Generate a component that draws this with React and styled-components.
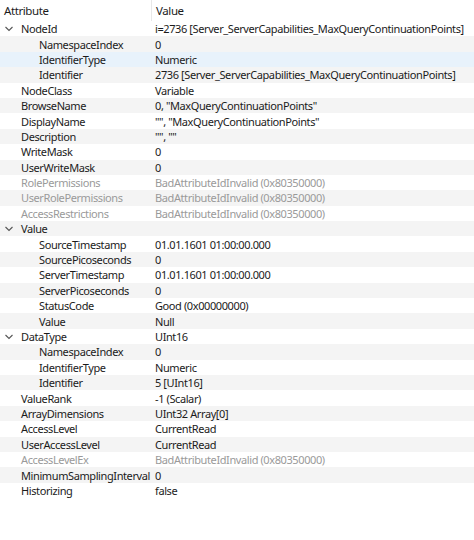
import React from "react";
import styled, { createGlobalStyle } from "styled-components";

const GlobalStyle = createGlobalStyle`
	html, body {
		margin: 0;
		padding: 0;
		background: #ffffff;
	}
	body {
		font-family: "Noto Sans", "Open Sans", sans-serif;
		font-size: 11px;
		letter-spacing: -0.4px;
		color: #1b1b1b;
	}
`;

const Grid = styled.div`
	width: 474px;
	height: 540px;
	background: #ffffff;
	display: flex;
	flex-direction: column;
`;

const Header = styled.div`
	display: grid;
	grid-template-columns: 151px 1fr;
	height: 21px;
	align-items: center;
	font-size: 11.5px;
`;

const HeaderCell = styled.div`
	padding-left: 4px;
	height: 100%;
	display: flex;
	align-items: center;
	border-left: ${(p) => (p.first ? "none" : "1px solid #e8e8e8")};
`;

const Row = styled.div`
	display: grid;
	grid-template-columns: 151px 1fr;
	height: 15.4px;
	align-items: center;
	white-space: nowrap;
	background: ${(p) => (p.hot ? "#e8f2fb" : p.alt ? "#f4f4f4" : "#ffffff")};
	color: ${(p) => (p.dim ? "#9a9a9a" : "#1b1b1b")};
`;

const NameCell = styled.div`
	position: relative;
	padding-left: ${(p) => 21 + p.level * 18}px;
`;

const Toggle = styled.svg`
	position: absolute;
	left: 5px;
	top: 50%;
	margin-top: -3px;
	width: 8px;
	height: 6px;
`;

const ValueCell = styled.div`
	padding-left: 4px;
`;

const rows = [
	{ name: "NodeId", value: "i=2736 [Server_ServerCapabilities_MaxQueryContinuationPoints]", open: true },
	{ name: "NamespaceIndex", value: "0", level: 1 },
	{ name: "IdentifierType", value: "Numeric", level: 1, hot: true },
	{ name: "Identifier", value: "2736 [Server_ServerCapabilities_MaxQueryContinuationPoints]", level: 1 },
	{ name: "NodeClass", value: "Variable" },
	{ name: "BrowseName", value: '0, "MaxQueryContinuationPoints"' },
	{ name: "DisplayName", value: '"", "MaxQueryContinuationPoints"' },
	{ name: "Description", value: '"", ""' },
	{ name: "WriteMask", value: "0" },
	{ name: "UserWriteMask", value: "0" },
	{ name: "RolePermissions", value: "BadAttributeIdInvalid (0x80350000)", dim: true },
	{ name: "UserRolePermissions", value: "BadAttributeIdInvalid (0x80350000)", dim: true },
	{ name: "AccessRestrictions", value: "BadAttributeIdInvalid (0x80350000)", dim: true },
	{ name: "Value", value: "", open: true },
	{ name: "SourceTimestamp", value: "01.01.1601 01:00:00.000", level: 1 },
	{ name: "SourcePicoseconds", value: "0", level: 1 },
	{ name: "ServerTimestamp", value: "01.01.1601 01:00:00.000", level: 1 },
	{ name: "ServerPicoseconds", value: "0", level: 1 },
	{ name: "StatusCode", value: "Good (0x00000000)", level: 1 },
	{ name: "Value", value: "Null", level: 1 },
	{ name: "DataType", value: "UInt16", open: true },
	{ name: "NamespaceIndex", value: "0", level: 1 },
	{ name: "IdentifierType", value: "Numeric", level: 1 },
	{ name: "Identifier", value: "5 [UInt16]", level: 1 },
	{ name: "ValueRank", value: "-1 (Scalar)" },
	{ name: "ArrayDimensions", value: "UInt32 Array[0]" },
	{ name: "AccessLevel", value: "CurrentRead" },
	{ name: "UserAccessLevel", value: "CurrentRead" },
	{ name: "AccessLevelEx", value: "BadAttributeIdInvalid (0x80350000)", dim: true },
	{ name: "MinimumSamplingInterval", value: "0" },
	{ name: "Historizing", value: "false" },
];

const App = () => {
	return (
		<>
			<GlobalStyle />
			<Grid>
				<Header>
					<HeaderCell first>Attribute</HeaderCell>
					<HeaderCell>Value</HeaderCell>
				</Header>
				{rows.map((r, i) => (
					<Row key={i} alt={i % 2 === 1} hot={r.hot} dim={r.dim}>
						<NameCell level={r.level || 0}>
							{r.open && (
								<Toggle viewBox="0 0 8 6">
									<polyline points="0.5,1 4,4.5 7.5,1" fill="none" stroke="#555" strokeWidth="1.1" />
								</Toggle>
							)}
							{r.name}
						</NameCell>
						<ValueCell>{r.value}</ValueCell>
					</Row>
				))}
			</Grid>
		</>
	);
};

export default App;
